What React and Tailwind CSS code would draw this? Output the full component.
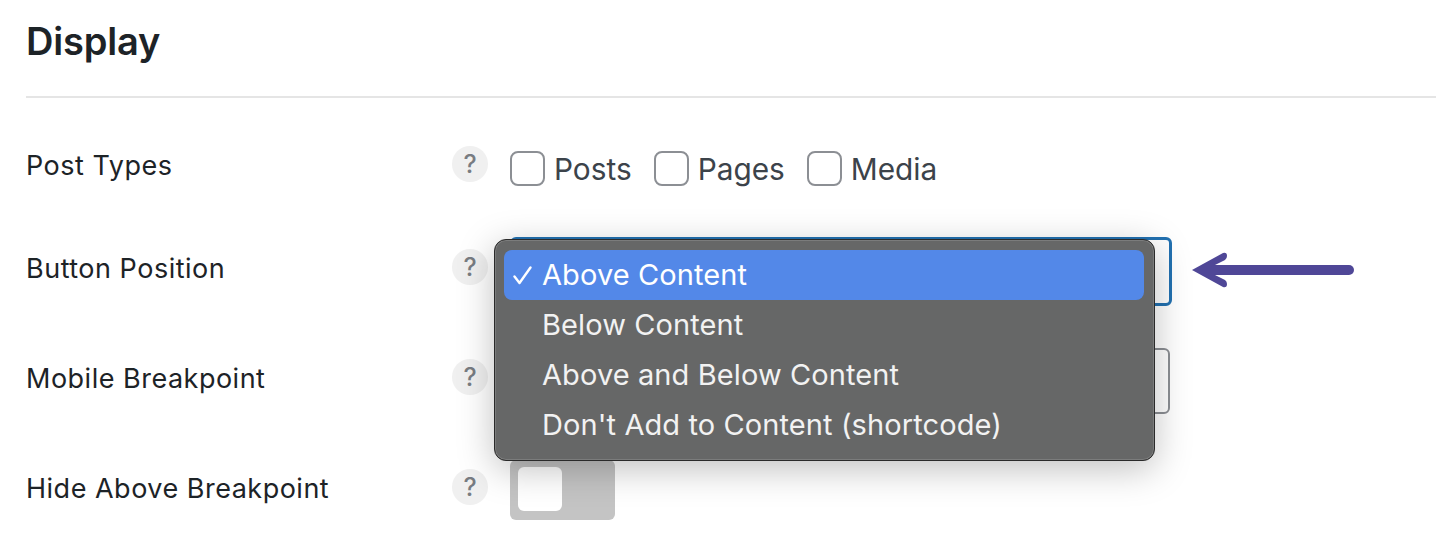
import React from "react";

function Help() {
  return (
    <div className="w-[36px] h-[36px] rounded-full bg-[#f0f0f0] flex items-center justify-center text-[#787c82] text-[25px] font-medium leading-none">?</div>
  );
}

function Check({ label }) {
  return (
    <label className="flex items-center gap-[9px]">
      <span className="w-[35px] h-[35px] rounded-[8px] border-2 border-[#8c8f94] bg-white block" />
      <span className="mt-[2px] text-[29.8px] leading-[36px] text-[#3c434a]">{label}</span>
    </label>
  );
}

function Row({ label, className, children }) {
  return (
    <div className={"flex items-start " + className}>
      <div className="w-[426px] mt-[2px] text-[27px] leading-[36px] tracking-[0.5px] text-[#1d2327]">{label}</div>
      <div className="w-[58px]"><Help /></div>
      <div className="flex-1">{children}</div>
    </div>
  );
}

export default function App() {
  return (
    <div className="relative w-[1436px] h-[542px] overflow-hidden bg-white pl-[26px] font-['Inter','Liberation_Sans',sans-serif]">
      <h2 className="pt-[19px] h-[96px] text-[38px] leading-[44px] font-semibold text-[#1d2327] tracking-[-0.2px]">Display</h2>
      <div className="h-[2px] bg-[#e5e5e5]" />
      <Row label="Post Types" className="mt-[48px] h-[103px]">
        <div className="flex items-center gap-[22px] pt-[3px]">
          <Check label="Posts" />
          <Check label="Pages" />
          <Check label="Media" />
        </div>
      </Row>
      <Row label="Button Position" className="h-[110px]">
        <div className="w-[662px] h-[69px] -mt-[12px] rounded-[6px] border-[3px] border-[#2271b1]" />
      </Row>
      <Row label="Mobile Breakpoint" className="h-[110px]">
        <div className="w-[660px] h-[66px] -mt-[11px] rounded-[6px] border-2 border-[#8c8f94]" />
      </Row>
      <Row label="Hide Above Breakpoint" className="h-[73px]">
        <div className="w-[105px] h-[60px] -mt-[9px] rounded-[6px] bg-[#c4c4c4] px-[8px] py-[7px]">
          <div className="w-[44px] h-[44px] rounded-[6px] bg-white" />
        </div>
      </Row>

      <div className="absolute left-[494px] top-[239px] w-[661px] h-[222px] rounded-[12px] border border-[#2a2a2a] bg-[#666767] shadow-[inset_0_0_0_1px_rgba(255,255,255,0.14),0_8px_36px_rgba(0,0,0,0.25)] px-[9px] pt-[10px] text-[29px] leading-[50px] tracking-[0.1px] text-[#f2f2f2]">
        <div className="h-[50px] w-[640px] rounded-[8px] bg-[#5388e8] text-white flex items-center pl-[9px]">
          <svg width="19" height="19" viewBox="0 0 19 19" fill="none" className="mr-[10px] shrink-0"><path d="M1.5 10.5 L6.5 17 L17.5 1.5" stroke="white" strokeWidth="2.4" strokeLinecap="round" strokeLinejoin="round" /></svg>
          <span>Above Content</span>
        </div>
        <div className="pl-[38px] h-[50px]">Below Content</div>
        <div className="pl-[38px] h-[50px]">Above and Below Content</div>
        <div className="pl-[38px] h-[50px]">Don't Add to Content (shortcode)</div>
      </div>

      <svg className="absolute left-[1190px] top-[250px]" width="170" height="40" viewBox="0 0 170 40" fill="none">
        <path d="M22 20 H159" stroke="#4f4797" strokeWidth="10" strokeLinecap="round" />
        <path d="M2 20 L33 3 Q37 2 37 6 Q37 8.5 35 10 L21 17 L21 23 L35 30 Q37 31.5 37 34 Q37 38 33 37 Z" fill="#4f4797" />
      </svg>
    </div>
  );
}
